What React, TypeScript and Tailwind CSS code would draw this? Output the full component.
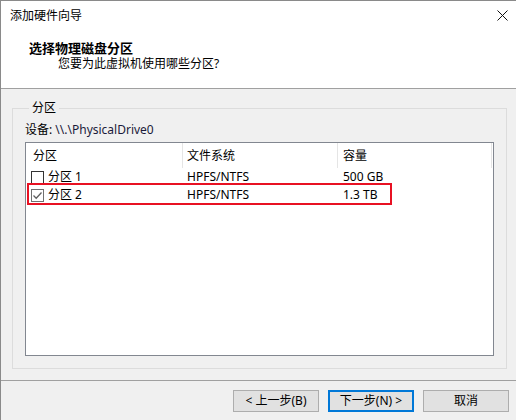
import type { ReactNode } from "react";

interface PartitionRow {
  name: string;
  fs: string;
  size: string;
  checked: boolean;
  marked?: boolean;
}

const rows: PartitionRow[] = [
  { name: "分区 1", fs: "HPFS/NTFS", size: "500 GB", checked: false },
  { name: "分区 2", fs: "HPFS/NTFS", size: "1.3 TB", checked: true, marked: true },
];

const font = "font-['Noto_Sans','Noto_Sans_CJK_SC',sans-serif]";
const cols = "grid grid-cols-[157px_155px_154px]";

function CloseIcon() {
  return (
    <svg width="11" height="11" viewBox="0 0 11 11" className="block">
      <path d="M0.5 0.5 L10.5 10.5 M10.5 0.5 L0.5 10.5" stroke="#111" strokeWidth="1" fill="none" />
    </svg>
  );
}

function CheckBox({ checked }: { checked: boolean }) {
  return (
    <span
      className={`flex h-[13px] w-[13px] shrink-0 items-center justify-center border bg-white ${
        checked ? "border-[#707070]" : "border-[#333]"
      }`}
    >
      {checked && (
        <svg width="11" height="11" viewBox="0 0 11 11">
          <path d="M1.5 5.5 L4.2 8.2 L9.5 2.5" stroke="#606060" strokeWidth="1.3" fill="none" />
        </svg>
      )}
    </span>
  );
}

function HeaderCell({ children, pad }: { children: ReactNode; pad: string }) {
  return (
    <div className={`flex h-[25px] items-center border-r border-[#e5e5e5] ${pad}`}>{children}</div>
  );
}

function WizardButton({ children, primary }: { children: ReactNode; primary?: boolean }) {
  return (
    <button
      className={`h-[22px] w-[86px] bg-[#e1e1e1] text-[12px] leading-none text-black ${
        primary ? "border-2 border-[#0078d7]" : "border border-[#adadad]"
      }`}
    >
      {children}
    </button>
  );
}

export default function App() {
  return (
    <div
      className={`flex h-[420px] w-[516px] flex-col overflow-hidden border-l border-t border-[#8a8a8a] bg-[#f0f0f0] text-[12px] text-black ${font}`}
    >
      {/* title bar */}
      <div className="flex h-[29px] shrink-0 items-center justify-between bg-white pl-[9px] pr-[8px]">
        <span className="leading-[16px]">添加硬件向导</span>
        <CloseIcon />
      </div>

      {/* wizard page header */}
      <div className="h-[59px] shrink-0 border-b border-[#a0a0a0] bg-white pl-[28px] pt-[10px]">
        <div className="text-[13px] font-bold leading-[16px]">选择物理磁盘分区</div>
        <div className="ml-[29px] leading-[15px]">您要为此虚拟机使用哪些分区?</div>
      </div>

      <div className="flex-1 pl-[11px] pr-[9px] pt-[11px]">
        <fieldset className="border border-[#dcdcdc] px-[12px] pb-[12px]">
          <legend className="ml-[4px] px-[3px] leading-[16px]">分区</legend>
          <div className="mt-[6px] leading-[16px]">
            设备: <span className="text-[#1a1a3a]">\\.\PhysicalDrive0</span>
          </div>

          <div className="mt-[4px] h-[214px] border border-[#828790] bg-white">
            <div className={cols}>
              <HeaderCell pad="pl-[7px]">分区</HeaderCell>
              <HeaderCell pad="pl-[4px]">文件系统</HeaderCell>
              <HeaderCell pad="pl-[5px]">容量</HeaderCell>
            </div>
            {rows.map((row) => (
              <div key={row.name} className={`relative h-[18px] items-center ${cols}`}>
                <div className="flex items-center gap-[4px] pl-[5px]">
                  <CheckBox checked={row.checked} />
                  <span>{row.name}</span>
                </div>
                <div className="pl-[4px]">{row.fs}</div>
                <div className="pl-[5px]">{row.size}</div>
                {row.marked && (
                  <span className="pointer-events-none absolute -top-[3px] bottom-[-1px] left-[1px] w-[365px] border-2 border-[#e81123]" />
                )}
              </div>
            ))}
          </div>
        </fieldset>
      </div>

      {/* footer buttons */}
      <div className="flex h-[40px] shrink-0 justify-end gap-[9px] border-t border-[#a0a0a0] pr-[7px] pt-[9px]">
        <WizardButton>&lt; 上一步(B)</WizardButton>
        <WizardButton primary>下一步(N) &gt;</WizardButton>
        <WizardButton>取消</WizardButton>
      </div>
    </div>
  );
}
